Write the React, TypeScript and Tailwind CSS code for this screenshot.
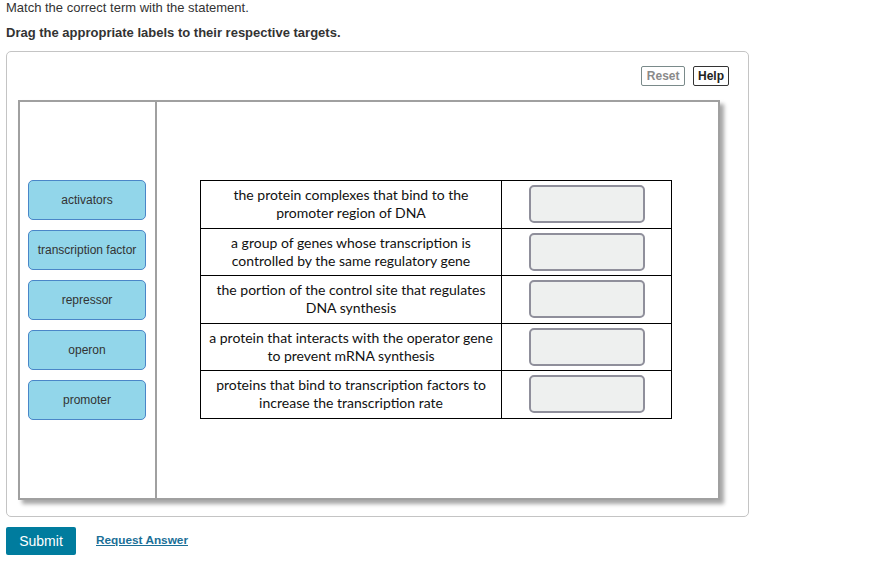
import React from 'react';

const labels = ['activators', 'transcription factor', 'repressor', 'operon', 'promoter'];

const statements = [
  ['the protein complexes that bind to the', 'promoter region of DNA'],
  ['a group of genes whose transcription is', 'controlled by the same regulatory gene'],
  ['the portion of the control site that regulates', 'DNA synthesis'],
  ['a protein that interacts with the operator gene', 'to prevent mRNA synthesis'],
  ['proteins that bind to transcription factors to', 'increase the transcription rate'],
];

export default function App() {
  return (
    <div className="w-[880px] h-[565px] bg-white font-['Liberation_Sans',Arial,sans-serif] text-[#333]">
      <div className="pl-[6px] pt-[1px] text-[13px] leading-[13px] text-[#333]">Match the correct term with the statement.</div>
      <div className="pl-[6px] pt-[12px] text-[13px] leading-[13px] font-bold text-[#333]">
        Drag the appropriate labels to their respective targets.
      </div>

      {/* Main box */}
      <div className="ml-[6px] mt-[12px] w-[743px] h-[466px] border border-[#c4c4c4] rounded-[5px] pt-[14px]">
        <div className="flex justify-end gap-[8px] pr-[19px]">
          <button className="h-[20px] px-[4.5px] border border-[#7a8a8a] rounded-[2px] text-[12px] font-bold text-[#8a8a8a] leading-[18px]">
            Reset
          </button>
          <button className="h-[20px] px-[4px] border border-[#333] rounded-[2px] text-[12px] font-bold text-[#222] leading-[18px]">
            Help
          </button>
        </div>

        {/* Canvas */}
        <div className="ml-[11px] mt-[14px] w-[702px] h-[400px] flex border-2 border-[#a0a0a0] shadow-[4px_4px_4px_rgba(0,0,0,0.35)] bg-white">
          <div className="w-[137px] border-r-2 border-[#a0a0a0] pt-[78px] pl-[8px] flex flex-col gap-[10px]">
            {labels.map((l) => (
              <div
                key={l}
                className="w-[118px] h-[40px] rounded-[5px] bg-[#92d6ea] border border-[#4a86c8] flex items-center justify-center text-[12px] text-[#333]"
              >
                {l}
              </div>
            ))}
          </div>
          <div className="flex-1 pt-[78px] pl-[43px]">
            <table className="border-collapse font-['Lato','Open_Sans',sans-serif] text-[14px] leading-[18px] text-[#111]">
              <tbody>
                {statements.map((s, i) => (
                  <tr key={i} className="h-[47.5px]">
                    <td className="w-[301px] border border-black text-center px-[2px]">
                      {s[0]}
                      <br />
                      {s[1]}
                    </td>
                    <td className="w-[170px] border border-black">
                      <div className="mx-auto w-[116px] h-[38px] rounded-[5px] bg-[#eef0ef] border-2 border-[#8f8f9b]" />
                    </td>
                  </tr>
                ))}
              </tbody>
            </table>
          </div>
        </div>
      </div>

      <div className="flex items-center mt-[10px] pl-[6px]">
        <button className="w-[70px] h-[28px] bg-[#007c9e] rounded-[2px] text-white text-[14px]">Submit</button>
        <a className="ml-[20px] text-[11.8px] font-bold underline text-[#1a6f97]">Request Answer</a>
      </div>
    </div>
  );
}
